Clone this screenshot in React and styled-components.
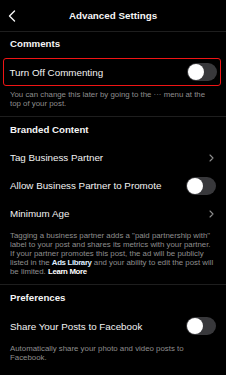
import React from "react";
import styled, { createGlobalStyle } from "styled-components";

const GlobalStyle = createGlobalStyle`
  html, body {
    margin: 0;
    background: #000000;
  }
  body {
    font-family: "Liberation Sans", Arial, sans-serif;
    color: #f5f5f5;
    -webkit-font-smoothing: antialiased;
  }
`;

const Screen = styled.div`
  width: 226px;
  min-height: 375px;
  background: #000000;
  overflow: hidden;
`;

const Header = styled.header`
  display: grid;
  grid-template-columns: 24px 1fr 24px;
  align-items: center;
  height: 31px;
  border-bottom: 1px solid #1e1e1e;
`;

const BackButton = styled.button`
  display: flex;
  align-items: center;
  justify-content: center;
  padding: 0;
  width: 24px;
  height: 31px;
  background: none;
  border: none;
`;

const Title = styled.h1`
  margin: 0;
  text-align: center;
  font-size: 9.8px;
  font-weight: 700;
  color: #f5f5f5;
`;

const Section = styled.section`
  padding: ${props => props.$top || 7}px 10px 8px;
  border-bottom: ${props => (props.$last ? "none" : "1px solid #1e1e1e")};
`;

const SectionTitle = styled.h2`
  margin: 0 0 8px;
  font-size: 9.7px;
  line-height: 12px;
  font-weight: 700;
  color: #f5f5f5;
`;

const Row = styled.div`
  display: flex;
  align-items: center;
  justify-content: space-between;
  height: 28px;
  box-sizing: border-box;
  ${props =>
    props.$highlight &&
    `
    margin: 0 -5px 0 -7px;
    padding: 0 3.5px 0 5.5px;
    border: 1.5px solid #f01515;
    border-radius: 3px;
  `}
`;

const Label = styled.span`
  font-size: 9.8px;
  color: #f2f2f2;
`;

const Track = styled.div`
  position: relative;
  width: 30px;
  height: 18px;
  border-radius: 9px;
  background: #38383b;
`;

const Knob = styled.div`
  position: absolute;
  top: 1px;
  left: ${props => (props.$on ? "13px" : "1px")};
  width: 16px;
  height: 16px;
  border-radius: 50%;
  background: #ffffff;
`;

const Desc = styled.p`
  margin: 3.5px -1px 0 0;
  font-size: 7.85px;
  line-height: 9.05px;
  color: #8e8e8e;
`;

const LinkText = styled.span`
  color: ${props => (props.$bright ? "#ffffff" : "#dfeeff")};
  font-weight: 700;
  letter-spacing: -0.35px;
`;

const Chevron = styled.svg`
  margin-right: 2px;
`;

const Toggle = ({ on }) => (
  <Track>
    <Knob $on={on} />
  </Track>
);

const Arrow = () => (
  <Chevron width="5" height="8" viewBox="0 0 5 8">
    <path d="M1 1l3 3-3 3" fill="none" stroke="#8e8e8e" strokeWidth="1.1" strokeLinecap="round" strokeLinejoin="round" />
  </Chevron>
);

const App = () => {
  return (
    <Screen>
      <GlobalStyle />
      <Header>
        <BackButton>
          <svg width="8" height="12" viewBox="0 0 8 12">
            <path d="M6.5 1L1.5 6l5 5" fill="none" stroke="#f5f5f5" strokeWidth="1.4" strokeLinecap="round" strokeLinejoin="round" />
          </svg>
        </BackButton>
        <Title>Advanced Settings</Title>
        <span />
      </Header>

      <Section $top={6}>
        <SectionTitle>Comments</SectionTitle>
        <Row $highlight>
          <Label>Turn Off Commenting</Label>
          <Toggle />
        </Row>
        <Desc>
          You can change this later by going to the ··· menu at the top of your post.
        </Desc>
      </Section>

      <Section>
        <SectionTitle>Branded Content</SectionTitle>
        <Row>
          <Label>Tag Business Partner</Label>
          <Arrow />
        </Row>
        <Row>
          <Label>Allow Business Partner to Promote</Label>
          <Toggle />
        </Row>
        <Row>
          <Label>Minimum Age</Label>
          <Arrow />
        </Row>
        <Desc>
          Tagging a business partner adds a "paid partnership with" label to your post and
          shares its metrics with your partner. If your partner promotes this post, the ad
          will be publicly listed in the <LinkText>Ads Library</LinkText> and your ability to
          edit the post will be limited. <LinkText $bright>Learn More</LinkText>
        </Desc>
      </Section>

      <Section $last>
        <SectionTitle>Preferences</SectionTitle>
        <Row>
          <Label>Share Your Posts to Facebook</Label>
          <Toggle />
        </Row>
        <Desc>Automatically share your photo and video posts to Facebook.</Desc>
      </Section>
    </Screen>
  );
};

export default App;
